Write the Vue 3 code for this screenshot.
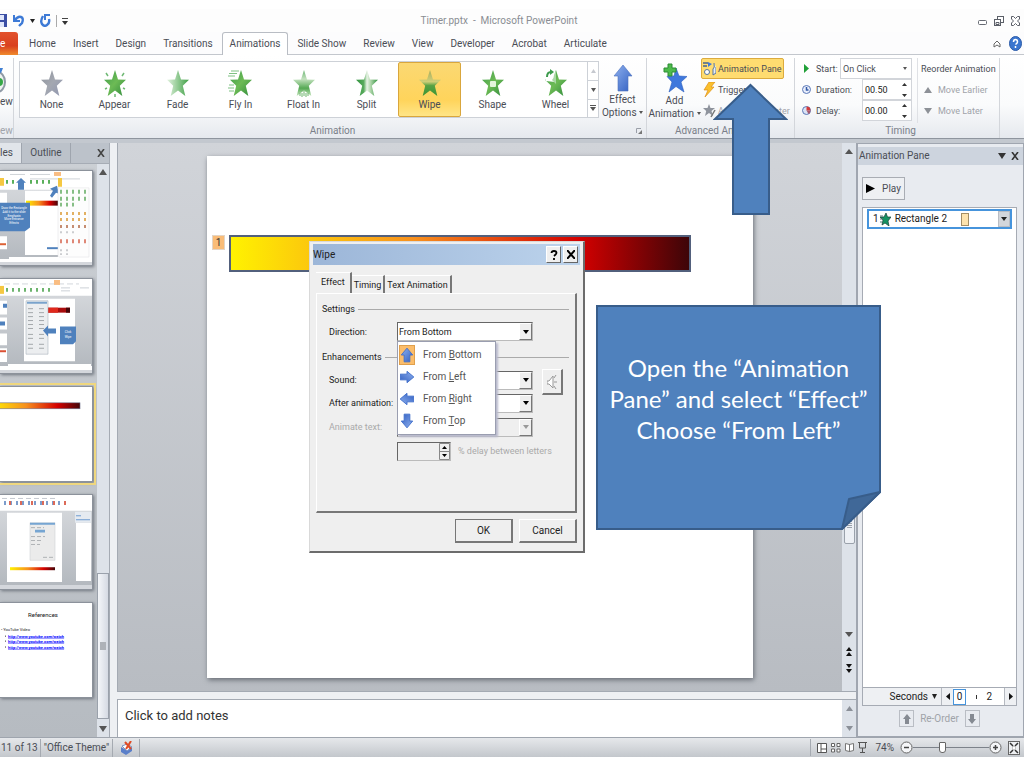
<script setup>
import { ref } from 'vue'

const tabs = ['Home', 'Insert', 'Design', 'Transitions', 'Animations', 'Slide Show', 'Review', 'View', 'Developer', 'Acrobat', 'Articulate']
const effects = [
  { name: 'None', fill: 'url(#g-none)' },
  { name: 'Appear', fill: 'url(#g-green)' },
  { name: 'Fade', fill: 'url(#g-fade)' },
  { name: 'Fly In', fill: 'url(#g-green)' },
  { name: 'Float In', fill: 'url(#g-float)' },
  { name: 'Split', fill: 'url(#g-split)' },
  { name: 'Wipe', fill: 'url(#g-wipe)' },
  { name: 'Shape', fill: 'url(#g-green)' },
  { name: 'Wheel', fill: 'url(#g-green)' },
]
const directions = [
  { key: 'B', rest: 'ottom', turn: 'up' },
  { key: 'L', rest: 'eft', turn: 'right' },
  { key: 'R', rest: 'ight', turn: 'left' },
  { key: 'T', rest: 'op', turn: 'down' },
]
const duration = ref('00.50')
const delay = ref('00.00')
const zoom = ref(37)
</script>

<template>
  <div class="window">
    <svg class="defs" width="0" height="0" aria-hidden="true">
      <defs>
        <linearGradient id="g-none" x1="0" y1="0" x2="1" y2="1"><stop offset="0" stop-color="#8d929b" /><stop offset=".5" stop-color="#a4a8b1" /><stop offset="1" stop-color="#8f95b0" /></linearGradient>
        <linearGradient id="g-green" x1="0" y1="0" x2="1" y2="1"><stop offset="0" stop-color="#3d9b4d" /><stop offset=".5" stop-color="#6dbb55" /><stop offset="1" stop-color="#2f8a3c" /></linearGradient>
        <linearGradient id="g-fade"><stop offset="0" stop-color="#e3f3e0" /><stop offset="1" stop-color="#3fa045" /></linearGradient>
        <linearGradient id="g-float" x1="0" y1="0" x2="0" y2="1"><stop offset="0" stop-color="#6ab573" /><stop offset=".35" stop-color="#c5e2c0" /><stop offset=".7" stop-color="#55a954" /><stop offset="1" stop-color="#c5e6bd" /></linearGradient>
        <linearGradient id="g-split"><stop offset="0" stop-color="#2f923e" /><stop offset=".35" stop-color="#58ab5c" /><stop offset=".5" stop-color="#e8f3e6" /><stop offset=".68" stop-color="#a9d3a5" /><stop offset="1" stop-color="#2f923e" /></linearGradient>
        <linearGradient id="g-wipe" x1="0" y1="0" x2="0" y2="1"><stop offset="0" stop-color="#a8ad5c" /><stop offset=".45" stop-color="#d0cf78" /><stop offset=".6" stop-color="#58a243" /><stop offset="1" stop-color="#3c9433" /></linearGradient>
        <linearGradient id="g-blue" x1="0" y1="0" x2="1" y2="1"><stop offset="0" stop-color="#8fb1ee" /><stop offset="1" stop-color="#3260c2" /></linearGradient>
        <linearGradient id="g-heat"><stop offset="0" stop-color="#fff200" /><stop offset=".4" stop-color="#f7901e" /><stop offset=".75" stop-color="#d40000" /><stop offset="1" stop-color="#450508" /></linearGradient>
        <linearGradient id="g-stage" x1="0" y1="0" x2="0" y2="1"><stop offset="0" stop-color="#d3d6da" /><stop offset="1" stop-color="#b4b9bf" /></linearGradient>
      </defs>
    </svg>

    <header class="titlebar">
      <div class="quick">
        <button aria-label="Save"><svg width="8" height="14"><path d="M0 0h7v13H0z" fill="#3b4fa5" /><path d="M0 1h4v5H0zM0 8h4v5H0z" fill="#dfe6fa" /></svg></button>
        <button aria-label="Undo"><svg width="12" height="13"><path d="M1 1v6h6" fill="none" stroke="#3d7ad6" stroke-width="2" /><path d="M2 6q3-4 6-3t1 6l-3 3" fill="none" stroke="#3d7ad6" stroke-width="2.4" /></svg></button>
        <svg width="5" height="4"><path d="M0 0h5L2.500 4z" fill="#222" /></svg>
        <button aria-label="Redo"><svg width="11" height="13"><path d="M3 2Q0 7 2 10t5 1q3-2 2-6" fill="none" stroke="#3d7ad6" stroke-width="2.400" /><path d="M5 6V1h5" fill="none" stroke="#3d7ad6" stroke-width="2" /></svg></button>
        <span class="bar"></span>
        <svg width="6" height="8"><path d="M0 1.500h6" stroke="#444" /><path d="M0 4h6L3 8z" fill="#333" /></svg>
      </div>
      <h1>Timer.pptx&nbsp; -&nbsp; Microsoft PowerPoint</h1>
      <div class="wincontrols">
        <button aria-label="Minimize"><svg width="9" height="12"><rect x=".5" y="5.500" width="8" height="4" rx="1" fill="#fff" stroke="#666a73" /></svg></button>
        <button aria-label="Restore"><svg width="10" height="12"><rect x="3.500" y="1.500" width="6" height="6" fill="#fff" stroke="#5b5f68" /><rect x=".5" y="4.500" width="6" height="6" fill="#fff" stroke="#5b5f68" /><path d="M2 7.500h3v2H2z" stroke="#5b5f68" fill="none" /></svg></button>
        <button aria-label="Close"><svg width="9" height="12"><path d="M.5 1.500h2l2 2 2-2h2v2.500l-2 2 2 2v2.500h-2l-2-2-2 2h-2V8l2-2-2-2z" fill="#fff" stroke="#5b5f68" /></svg></button>
      </div>
    </header>

    <nav class="tabs">
      <button class="file" aria-label="File">e</button>
      <button v-for="t in tabs" :key="t" class="tab" :class="{ on: t === 'Animations' }">{{ t }}</button>
      <div class="helpers">
        <button aria-label="Collapse ribbon"><svg width="8" height="8"><path d="M1 4l3-3 3 3v3L4 5 1 7z" fill="#fff" stroke="#666" /></svg></button>
        <button aria-label="Help"><svg width="13" height="15"><ellipse cx="6.500" cy="7.500" rx="6" ry="7" fill="#3b76cf" stroke="#2b5ba8" /><path d="M4.500 6q0-2.500 2-2.500T8.500 6q0 1-2 2.500M6.500 10v2" fill="none" stroke="#fff" stroke-width="1.500" /></svg></button>
      </div>
    </nav>

    <section class="ribbon">
      <div class="group preview">
        <div class="content"><button class="big" aria-label="Preview"><svg width="8" height="27"><ellipse cx="-3" cy="15" rx="8" ry="10" fill="#eef3f1" stroke="#8f9aa6" stroke-width="2" /><circle cx="-1" cy="15" r="4" fill="#37a848" /><path d="M-8 1H3l-2 5z" fill="#3f7fd3" /></svg><span>ew</span></button></div>
        <div class="caption">ew</div>
      </div>

      <div class="group animation">
        <div class="content">
          <div class="gallery">
            <button v-for="e in effects" :key="e.name" class="effect" :class="{ on: e.name === 'Wipe' }">
              <svg width="30" height="30" viewBox="0 0 30 30">
                <path d="M15 2l3 9.500 8 .3-6.200 6L22.300 28 15 22.500 7.700 28l2.500-10.200L4 11.800l8-.3z" :fill="e.fill" />
                <path v-if="e.name === 'Appear'" d="M8 8L6 5M22 8l2-3M7 20l-2 1M23 20l2 1M15 26v3" stroke="#6fb974" stroke-width="1.500" fill="none" />
                <path v-if="e.name === 'Fly In'" d="M5 3h8M3 5.500h8M2 8h7M3 17h5M2 20h6M3 23h5" stroke="#7fc183" fill="none" />
                <path v-if="e.name === 'Float In'" d="M11 28v-3M13 29v-4M15 28v-5M17 29v-4M19 28v-3" stroke="#6db56c" fill="none" />
                <rect v-if="e.name === 'Shape'" x="12" y="13" width="6" height="6" rx="1" fill="#e4f5dc" />
                <g v-if="e.name === 'Wheel'"><path d="M14 1v13L5 13V1z" fill="#fff" /><path d="M15 2v14l-4-4q2-2 2-5z" fill="#a9d8a5" /><path d="M6 9q0-5 4-5" fill="none" stroke="#3d9b4d" stroke-width="2" /><path d="M9 1l4 3-4 3z" fill="#3d9b4d" /></g>
              </svg>
              <span>{{ e.name }}</span>
            </button>
            <div class="scroller">
              <button aria-label="Row up"><svg width="5" height="4"><path d="M0 4h5L2.500 0z" fill="#c6c9cf" /></svg></button>
              <button aria-label="Row down"><svg width="5" height="4"><path d="M0 0h5L2.500 4z" fill="#555" /></svg></button>
              <button aria-label="More effects"><svg width="6" height="6"><path d="M0 .5h6" stroke="#555" /><path d="M0 2h6L3 6z" fill="#555" /></svg></button>
            </div>
          </div>
          <button class="big options">
            <svg width="22" height="28"><path d="M11 1l9 11h-4v15H6V12H2z" fill="url(#g-blue)" stroke="#4a70bd" stroke-width=".6" /></svg>
            <span>Effect<br />Options <i class="caret"></i></span>
          </button>
        </div>
        <div class="caption">Animation</div>
        <svg class="launcher" width="6" height="6"><path d="M.5 5V.5H5" fill="none" stroke="#9a9fa8" /><path d="M6 2v4H2z" fill="#777" /></svg>
      </div>

      <div class="group advanced">
        <div class="content">
          <button class="big add">
            <svg width="24" height="30"><path d="M13 5l3 8 8 .5-6 5.500 3 10-8-5.500L6 29l3-10-5-5.500 7-.5z" fill="#3f78dc" stroke="#2a5dbd" stroke-width=".6" /><path d="M5 1h4v4h4v4H9v4H5V9H1V5h4z" fill="#4dbb4b" stroke="#2c8c34" /></svg>
            <span>Add<br />Animation <i class="caret"></i></span>
          </button>
          <div class="stack">
            <button class="tool on"><svg width="13" height="15"><path d="M0 2h5M0 5h4" stroke="#46638f" stroke-width="1.500" /><path d="M5 1l4 2-4 3z" fill="#3f78dc" /><circle cx="4" cy="11" r="2.500" fill="#fff" stroke="#56749f" /><path d="M11 2q1 5-1 6v6l3-2V6" fill="#e8eef6" stroke="#56749f" /></svg>Animation Pane</button>
            <button class="tool"><svg width="13" height="15"><path d="M6 0h6L8 5h3L2 15l3-7H1z" fill="#fbc02d" stroke="#de8f18" stroke-width=".7" /></svg>Trigger <i class="caret"></i></button>
            <button class="tool off"><svg width="13" height="15"><path d="M6 1l1.500 4H12L8.500 8l1.500 5-4-3-4 3 1.200-5L0 5h4.500z" fill="#8f949d" /><path d="M12 7l-4 7" stroke="#777" stroke-width="1.500" /></svg>Animation Painter</button>
          </div>
        </div>
        <div class="caption">Advanced Animation</div>
      </div>

      <div class="group timing">
        <div class="content">
          <div class="fields">
            <label for="start"><svg width="9" height="11"><path d="M2 1l5 4.500-5 4.500z" fill="#21a038" /></svg>Start:</label>
            <div class="pick wide"><select id="start"><option>On Click</option></select><i class="caret"></i></div>
            <label for="duration"><svg width="9" height="11"><circle cx="4.500" cy="5.500" r="4" fill="#e9eefb" stroke="#5b79b8" /><path d="M4.500 3v3h2" fill="none" stroke="#345ba8" stroke-width="1.500" /></svg>Duration:</label>
            <div class="pick"><input id="duration" v-model="duration" /><svg width="5" height="14"><path d="M0 3h5L2.500 0zM0 11h5l-2.500 3z" fill="#333" /></svg></div>
            <label for="delay"><svg width="9" height="11"><circle cx="4.500" cy="5.500" r="4" fill="#d9e2f5" stroke="#5b79b8" /><path d="M4.500 1.500v4h4q0-4-4-4z" fill="#d23a3a" /><path d="M4.500 5.500h4q0 3-2 3.500z" fill="#a55a70" /></svg>Delay:</label>
            <div class="pick"><input id="delay" v-model="delay" /><svg width="5" height="14"><path d="M0 3h5L2.500 0zM0 11h5l-2.500 3z" fill="#333" /></svg></div>
          </div>
          <div class="reorder">
            <strong>Reorder Animation</strong>
            <button disabled><svg width="8" height="6"><path d="M0 6h8L4 0z" fill="#8d9197" /></svg>Move Earlier</button>
            <button disabled><svg width="8" height="6"><path d="M0 0h8L4 6z" fill="#8d9197" /></svg>Move Later</button>
          </div>
        </div>
        <div class="caption">Timing</div>
      </div>
    </section>

    <main class="work">
      <aside class="slides">
        <div class="sidetabs">
          <button class="on" aria-label="Slides">les</button>
          <button>Outline</button>
          <button class="close" aria-label="Close panel"><svg width="8" height="8"><path d="M1 0l6 8M7 0L1 8" stroke="#444" stroke-width="1.600" /></svg></button>
        </div>
        <div class="thumbs">
          <div class="list">
            <svg class="thumb" viewBox="0 0 92 95" preserveAspectRatio="none">
              <rect width="92" height="95" fill="#fff" />
              <path d="M0 19h58v70H0z" fill="url(#g-stage)" /><path d="M10 3.500h15M30 3.500h20M0 8h3M30 8h50" stroke="#cfd3d8" />
              <path d="M54 1h7v4h-7z" fill="#f9bd83" /><path d="M0 7h4v8H0zM58 7h4v9h-4z" fill="#f5c842" />
              <path d="M6 11h2M12 11h2M30 11h2M36 11h2M42 11h2M48 11h2" stroke="#5ab05b" stroke-width="4" />
              <path d="M25 20h33v65H25z" fill="#fff" /><path d="M26 30h32v5H26z" fill="url(#g-heat)" />
              <path d="M21 7l5 5h-2v7h-6v-7h-2zM57 15l2 8-3-1-4 5-2-2 3-5-3-2z" fill="#4f81bd" />
              <path d="M47 77h12v2H47z" fill="#4f81bd" />
              <path d="M58 17h31v70H58z" fill="#fdfdfd" stroke="#e0e0e4" stroke-width=".5" />
              <path d="M60 21h27M60 28h27M60 34h14" stroke="#86be85" stroke-width="4" stroke-dasharray="2 4" />
              <path d="M60 43h27M60 49h27" stroke="#e2b062" stroke-width="3" stroke-dasharray="2 4" />
              <path d="M60 56h27" stroke="#c58d72" stroke-width="3" stroke-dasharray="2 4" /><path d="M60 62h14M60 80h9M60 84h8" stroke="#cccdd0" stroke-width="2" stroke-dasharray="2 4" />
              <path d="M60 71h27" stroke="#df8877" stroke-width="4" stroke-dasharray="2 4" />
              <path d="M0 22h7v12H0zM0 38h7v8H0zM0 66h7v13H0z" fill="#fff" /><path d="M0 73h6v2H0z" fill="#dc6135" />
              <path d="M0 32h30v25l-5 4H0z" fill="#4f81bd" />
              <text x="14" y="38" class="mini">Draw the Rectangle</text><text x="14" y="42" class="mini">Add it to the slide</text><text x="14" y="46" class="mini">Emphasis</text><text x="14" y="50" class="mini">More Entrance</text><text x="14" y="54" class="mini">Effects</text>
              <path d="M9 87h50v5H9z" fill="#fff" /><path d="M0 92h92v3H0z" fill="#d4d7dc" />
            </svg>
            <svg class="thumb" viewBox="0 0 92 95" preserveAspectRatio="none">
              <rect width="92" height="95" fill="#fff" /><path d="M0 17h92v71H0z" fill="url(#g-stage)" />
              <path d="M4 5h75" stroke="#d3d7dc" stroke-width="1" stroke-dasharray="6 3" /><path d="M54 1h6v5h-6z" fill="#f9bd83" /><path d="M0 7h4v8H0z" fill="#f5c842" />
              <path d="M6 11h45" stroke="#6db46e" stroke-width="4" stroke-dasharray="2 4" /><path d="M61 9h9M61 12h9M80 9h9" stroke="#ccd1d7" />
              <path d="M24 20h51v63H24z" fill="#fff" /><path d="M46 29h24v5H46z" fill="#a80c0c" /><path d="M46 29h12v5H46z" fill="#e0281c" /><path d="M66 29h4v5h-4z" fill="#450508" />
              <path d="M26 22h22v54H26z" fill="#eceef0" stroke="#9ba7b4" stroke-width=".5" /><path d="M27 23h20v2H27z" fill="#7aa3cc" />
              <path d="M28 30h17M28 34h17M28 38h17M28 42h17M28 46h17M28 50h17M28 56h17M28 60h17M28 66h17M28 70h17" stroke="#a3a7aa" stroke-dasharray="5 6" />
              <path d="M43 52l5-5v3h8v5h-8v3zM60 48h16v15l-3 3H60z" fill="#4f81bd" /><text x="68" y="55" class="mini">Click</text><text x="68" y="60" class="mini">Wipe</text>
              <path d="M0 22h7v14H0zM0 39h7v12H0zM0 55h7v12H0zM0 70h7v14H0z" fill="#fff" /><path d="M3 25h4v4H3zM0 43h5v4H0z" fill="#4f81bd" /><path d="M0 72h6v2H0z" fill="#db5033" />
              <path d="M8 86h83v5H8z" fill="#fff" /><path d="M0 92h92v3H0z" fill="#d4d7dc" />
            </svg>
            <svg class="thumb current" viewBox="0 0 92 95" preserveAspectRatio="none">
              <rect width="92" height="95" fill="#fff" /><rect x="-10" y="16" width="90" height="6" fill="url(#g-heat)" stroke="#6d6f8a" stroke-width=".6" />
            </svg>
            <svg class="thumb" viewBox="0 0 92 95" preserveAspectRatio="none">
              <rect width="92" height="95" fill="#fff" /><path d="M0 16h92v75H0z" fill="url(#g-stage)" />
              <path d="M2 3.500h53" stroke="#c5c9d0" stroke-dasharray="5 3" /><path d="M4 8h62" stroke="#7b9ccb" stroke-width="4" stroke-dasharray="2 4" /><path d="M9 8h57" stroke="#dc6a58" stroke-width="4" stroke-dasharray="2 9" />
              <path d="M7 18h55v70H7zM76 28h15v59H76z" fill="#fff" /><path d="M75 17h16v11H75z" fill="#e5eaf0" /><path d="M76 21h5M76 25h14" stroke="#6d9bd0" />
              <path d="M30 28h25v38H30z" fill="#ebebeb" stroke="#c8ccd0" stroke-width=".5" /><path d="M30 28h25v2H30zM35 35h10v3H35z" fill="#76a5d2" />
              <path d="M31 33h13M31 42h14M31 46h12M31 50h9M43 63h10" stroke="#aeb1b4" stroke-dasharray="4 2" />
              <rect x="10" y="73" width="45" height="3" fill="url(#g-heat)" /><path d="M0 91h92v4H0z" fill="#d4d7dc" />
            </svg>
            <svg class="thumb" viewBox="0 0 92 95" preserveAspectRatio="none">
              <rect width="92" height="95" fill="#fff" />
              <text x="43" y="14" class="reftitle">References</text><text x="1" y="28" class="refline">• YouTube Video</text>
              <text x="8" y="35" class="reflink">http://www.youtube.com/watch</text><text x="8" y="40" class="reflink">http://www.youtube.com/watch</text><text x="8" y="46" class="reflink">http://www.youtube.com/watch</text>
              <path d="M5 33.500h1M5 38.500h1M5 44.500h1" stroke="#333" />
            </svg>
          </div>
          <div class="scrollbar side">
            <svg width="8" height="6"><path d="M0 6h8L4 0z" fill="#555" /></svg>
            <span class="grip"></span>
            <svg width="8" height="6"><path d="M0 0h8L4 6z" fill="#555" /></svg>
          </div>
        </div>
      </aside>

      <section class="editor">
        <div class="stage">
          <div class="canvas"><div class="slide"><span class="badge">1</span><div class="heat"></div></div></div>
          <div class="scrollbar main">
            <svg width="8" height="5"><path d="M0 5h8L4 0z" fill="#555" /></svg>
            <span class="grip"></span>
            <div class="pager">
              <svg width="8" height="5"><path d="M0 0h8L4 5z" fill="#555" /></svg>
              <svg width="6" height="9"><path d="M0 4h6L3 0zM0 9h6L3 5z" fill="#111" /></svg>
              <svg width="6" height="9"><path d="M0 0h6L3 4zM0 5h6L3 9z" fill="#111" /></svg>
            </div>
          </div>
        </div>
        <div class="notes">
          <div class="notetext">Click to add notes</div>
          <div class="scrollbar"><svg width="7" height="5"><path d="M0 5h7L3.500 0z" fill="#8b9098" /></svg><svg width="7" height="5"><path d="M0 0h7L3.500 5z" fill="#8b9098" /></svg></div>
        </div>
      </section>

      <aside class="pane">
        <header><h2>Animation Pane</h2><svg width="8" height="6"><path d="M0 0h8L4 6z" fill="#333" /></svg><button aria-label="Close pane"><svg width="8" height="8"><path d="M1 0l6 8M7 0L1 8" stroke="#333" stroke-width="1.600" /></svg></button></header>
        <button class="play"><svg width="9" height="9"><path d="M0 0l9 4.500L0 9z" fill="#000" /></svg>Play</button>
        <div class="timeline">
          <div class="item"><span>1</span><svg width="12" height="13"><path d="M7 0l1.500 4H12L9 8l1 5-4-3-3 2 1-5L1 4h4z" fill="#159263" stroke="#163f37" stroke-width=".7" /><path d="M1 3h3M1 6h3M1 9h2" stroke="#577" /></svg><span class="name">Rectangle 2</span><i class="block"></i><button aria-label="Effect menu"><svg width="6" height="4"><path d="M0 0h6L3 4z" fill="#222" /></svg></button></div>
          <div class="ruler">
            <button class="unit">Seconds <svg width="5" height="5"><path d="M0 0h5L2.500 5z" fill="#222" /></svg></button>
            <button class="step" aria-label="Scroll left"><svg width="4" height="7"><path d="M4 0v7L0 3.500z" fill="#111" /></svg></button>
            <div class="marks"><span class="zero">0</span><span class="tick"></span><span>2</span></div>
            <button class="step" aria-label="Scroll right"><svg width="4" height="7"><path d="M0 0v7l4-3.500z" fill="#111" /></svg></button>
          </div>
        </div>
        <div class="moves">
          <button disabled aria-label="Move up"><svg width="8" height="10"><path d="M4 0l4 5H6v5H2V5H0z" fill="#858a92" /></svg></button>
          <span>Re-Order</span>
          <button disabled aria-label="Move down"><svg width="8" height="10"><path d="M4 10l4-5H6V0H2v5H0z" fill="#858a92" /></svg></button>
        </div>
      </aside>
    </main>

    <footer class="status">
      <span class="count">11 of 13</span><span class="theme">"Office Theme"</span>
      <span class="spell"><svg width="13" height="14"><path d="M1 6l5 3 6-3v4l-6 4-5-3z" fill="#5a7fc9" /><path d="M2 5l5-2 5 3-5 4z" fill="#fff" stroke="#7a93c4" /><path d="M5 1l6 7M11 0L6 8" stroke="#e04b25" stroke-width="2" /></svg></span>
      <div class="views">
        <button aria-label="Normal"><svg width="10" height="10"><path d="M.5.5h9v9h-9zM4 .5v9M4 6h6" fill="#fff" stroke="#555" /></svg></button>
        <button aria-label="Sorter"><svg width="10" height="10"><path d="M.5.500h3v3h-3zM6 .500h3v3H6zM.5 6h3v3h-3zM6 6h3v3H6z" fill="#fff" stroke="#666" /></svg></button>
        <button aria-label="Reading"><svg width="9" height="11"><path d="M.5 1.500l4 1 4-1v7l-4 1-4-1zM4.500 2v8" fill="#fff" stroke="#777" /></svg></button>
        <button aria-label="Show"><svg width="9" height="11"><path d="M0 .5h9M1.500 1v5h6V1M4.500 6v4M2 10.500h5" fill="none" stroke="#555" /></svg></button>
      </div>
      <span class="pct">74%</span>
      <button aria-label="Zoom out"><svg width="13" height="13"><circle cx="6.500" cy="6.500" r="5.500" fill="#f5f6f8" stroke="#666" /><path d="M4 6.500h5" stroke="#444" stroke-width="1.500" /></svg></button>
      <input v-model="zoom" class="zoom" type="range" aria-label="Zoom" />
      <button aria-label="Zoom in"><svg width="13" height="13"><circle cx="6.500" cy="6.500" r="5.500" fill="#f5f6f8" stroke="#666" /><path d="M4 6.500h5M6.500 4v5" stroke="#444" stroke-width="1.500" /></svg></button>
      <button aria-label="Fit"><svg width="12" height="14"><rect x=".5" y=".5" width="11" height="13" fill="#eef0f2" stroke="#666" /><path d="M2 2l3 3M10 2L7 5M2 12l3-3M10 12L7 9" stroke="#333" stroke-width="1.500" /><rect x="4.500" y="5.500" width="3" height="3" fill="#fff" stroke="#999" stroke-width=".5" /></svg></button>
    </footer>

    <section class="dialog" role="dialog" aria-label="Wipe">
      <header><h2>Wipe</h2>
        <button aria-label="What's this"><svg width="8" height="10"><path d="M1.500 3q0-2 2.500-2t2.500 2q0 1-2.500 3M4 8v2" fill="none" stroke="#000" stroke-width="1.800" /></svg></button>
        <button aria-label="Close"><svg width="8" height="9"><path d="M0 0l8 9M8 0L0 9" stroke="#000" stroke-width="2" /></svg></button>
      </header>
      <div class="dtabs"><button class="on">Effect</button><button>Timing</button><button>Text Animation</button></div>
      <div class="page">
        <div class="legend">Settings<i></i></div>
        <div class="row first"><label for="dir">Direction:</label>
          <div class="combo"><select id="dir"><option>From Bottom</option></select><b></b>
            <ul class="menu">
              <li v-for="(d, i) in directions" :key="d.key"><span class="ico" :class="{ on: i === 0 }"><svg width="14" height="16" viewBox="0 0 12 14"><path :class="d.turn" d="M6 1l5 6H8.500v6h-5V7H1z" fill="url(#g-blue)" stroke="#3f6fca" stroke-width=".8" /></svg></span><span>From <u>{{ d.key }}</u>{{ d.rest }}</span></li>
            </ul>
          </div>
        </div>
        <div class="legend">Enhancements<i></i></div>
        <div class="row sound"><label for="sound">Sound:</label><div class="combo"><select id="sound"><option></option></select><b></b></div>
          <button class="speaker" aria-label="Volume"><svg width="10" height="16"><path d="M0 7v3h2l4 4V2L2 7z" fill="#fff" stroke="#999" /><path d="M7 4l2-3M7 8h3M7 12l2 3" stroke="#999" /></svg></button></div>
        <div class="row"><label for="after">After animation:</label><div class="combo"><select id="after"><option></option></select><b></b></div></div>
        <div class="row dim"><label for="animtext">Animate text:</label><div class="combo"><select id="animtext" disabled><option></option></select><b></b></div></div>
        <div class="row dim"><span></span><div class="spin"><input id="pct" disabled /><span><svg width="11" height="17"><path d="M.5.500h10v16H.5zM0 8.500h11" fill="none" stroke="#888" /><path d="M3 6h5L5.500 3zM3 11h5l-2.500 3z" fill="#000" /></svg></span></div><label for="pct">% delay between letters</label></div>
      </div>
      <div class="actions"><button class="default">OK</button><button>Cancel</button></div>
    </section>

    <svg class="pointer" width="75" height="134"><path d="M37.500 3L73 37H56v95H20V37H2z" fill="#4f81bd" stroke="#385d8a" stroke-width="2" /></svg>
    <div class="callout">
      <svg viewBox="0 0 285 225" preserveAspectRatio="none"><path d="M1 1h283v186l-38 37H1z" fill="#4f81bd" stroke="#385d8a" stroke-width="2" /><path d="M246 224l7-30 31-7z" fill="#406898" stroke="#385d8a" stroke-width="2" stroke-linejoin="round" /></svg>
      <p>Open the “Animation<br />Pane” and select “Effect”<br />Choose “From Left”</p>
    </div>
  </div>
</template>

<style>
body { margin: 0; background: #fff; }
</style>

<style scoped>
.window { position: relative; display: flex; flex-direction: column; box-sizing: border-box; min-height: 100vh; padding: 9px 0 11px; overflow: hidden; background: #fff; color: #4a4d55; font: 10px/14px Roboto, sans-serif; }
.window * { box-sizing: border-box; }
.defs { position: absolute; }
button, input, select { margin: 0; padding: 0; border: 0; background: none; font: inherit; color: inherit; border-radius: 0; outline: 0; }
button { display: flex; align-items: center; justify-content: center; white-space: nowrap; }
select, .zoom { appearance: none; }
h1, h2, p, ul { margin: 0; padding: 0; font-weight: normal; font-size: inherit; }
svg { flex: none; display: block; }
.caret { display: inline-block; border: 2px solid transparent; border-top: 3px solid #555; border-bottom: 0; vertical-align: middle; }

.titlebar { display: grid; grid-template-columns: 1fr auto 1fr; align-items: center; height: 23px; background: #fdfdfd; }
.titlebar h1 { margin-right: 26px; color: #8a8d93; }
.quick { display: flex; align-items: center; gap: 5px; }
.bar { width: 1px; height: 12px; background: #aaa; }
.wincontrols { display: flex; justify-content: flex-end; gap: 7px; padding-right: 4px; }

.tabs { display: flex; gap: 1px; height: 23px; background: #fcfcfd; box-shadow: inset 0 -1px #c3c7cd; }
.file { width: 18px; margin-right: 2px; justify-content: flex-start; background: linear-gradient(#e2522d, #d9401f 60%, #f08a2c); color: #fff; border-radius: 0 3px 0 0; }
.tab { padding: 0 7px; border: 1px solid transparent; border-bottom: 0; }
.tab.on { border-color: #b9bdc4; border-radius: 3px 3px 0 0; background: #fff; }
.helpers { display: flex; gap: 8px; align-items: center; margin-left: auto; padding-right: 2px; }

.ribbon { display: flex; height: 84px; padding-top: 3px; background: linear-gradient(#fff, #fafbfc 60%, #e6e9ee); border-bottom: 1px solid #8f959e; }
.group { position: relative; display: flex; flex-direction: column; border-right: 1px solid #d3d6db; }
.group .content { display: flex; height: 65px; }
.caption { height: 15px; text-align: center; color: #7a7f89; white-space: nowrap; line-height: 15px; }
.preview { width: 14px; align-items: flex-start; }
.preview .caption { color: #a0a4ab; }
.big { flex-direction: column; gap: 1px; line-height: 13px; padding-top: 1px; }
.preview .big { justify-content: flex-start; align-items: flex-start; gap: 1px; padding-top: 9px; }
.animation { width: 633px; padding-left: 5px; }
.gallery { display: flex; margin-top: 3px; height: 57px; border: 1px solid #cdd1d7; background: #fff; }
.effect { width: 63px; flex-direction: column; border: 1px solid transparent; border-radius: 2px; }
.effect.on { border-color: #d9a63c; background: linear-gradient(#fbd873, #ffd45b 70%, #ffe587); }
.scroller { display: grid; grid-template-rows: repeat(3, 1fr); width: 11px; border-left: 1px solid #cdd1d7; }
.scroller button + button { border-top: 1px solid #cdd1d7; }
.options { width: 47px; }
.launcher { position: absolute; right: 4px; bottom: 4px; }
.advanced { width: 148px; padding-left: 1px; }
.add { width: 53px; }
.stack { display: grid; grid-template-rows: repeat(3, 21px); justify-items: start; font-size: 9px; }
.tool { gap: 2px; padding: 0 1px; border: 1px solid transparent; }
.tool.on { border-color: #dcab3e; border-radius: 2px; background: #ffdc70; }
.off, .reorder button { color: #a0a3a9; }
.timing { width: 205px; padding-left: 7px; }
.timing .content { font-size: 9px; }
.fields { display: grid; grid-template-columns: 60px 50px; grid-template-rows: repeat(3, 21px); }
.fields label { display: flex; align-items: center; gap: 5px; white-space: nowrap; }
.pick { display: flex; align-items: center; justify-content: space-between; height: 21px; padding: 0 4px 0 2px; border: 1px solid #d2d5da; background: #fff; }
.pick.wide { width: 72px; margin-left: -22px; }
.pick input { width: 30px; color: #222; }
.pick.wide select { flex: 1; }
.reorder { display: grid; grid-template-rows: repeat(3, 21px); align-items: center; justify-items: start; margin-left: 5px; padding-left: 3px; border-left: 1px solid #dfe1e5; white-space: nowrap; }
.reorder strong { font-weight: normal; }
.reorder button { gap: 6px; padding-left: 3px; }

.work { flex: 1; display: grid; grid-template-columns: 110px minmax(0, 1fr) 168px; column-gap: 0; padding-top: 4px; background: #c3c8cf; }
.slides { display: flex; flex-direction: column; background: linear-gradient(#ccd0d5, #b6bbc1); border-right: 1px solid #a5abb4; }
.sidetabs { display: flex; height: 21px; background: #bcc2ca; border-bottom: 1px solid #a6acb5; }
.sidetabs button { width: 49px; border-right: 1px solid #9fa5ae; }
.sidetabs .on { width: 22px; justify-content: flex-start; background: #e1e5ea; }
.sidetabs .close { width: 16px; margin-left: auto; border: 0; }
.thumbs { flex: 1; display: flex; justify-content: space-between; }
.list { display: flex; flex-direction: column; gap: 12px; padding-top: 6px; }
.thumb { width: 93px; height: 96px; border: 1px solid #8c929b; border-left: 0; box-shadow: 1px 1px 3px #6f757e; }
.thumb.current { outline: 2px solid #efd77e; outline-offset: 1px; }
.mini { font-size: 3px; fill: #fff; text-anchor: middle; }
.reftitle { font-size: 6px; fill: #111; text-anchor: middle; }
.refline { font-size: 4px; fill: #222; }
.reflink { font-size: 4px; font-weight: bold; fill: #00f; text-decoration: underline; }
.scrollbar { display: flex; flex-direction: column; align-items: center; justify-content: space-between; width: 14px; padding: 6px 0; background: #dde2e9; }
.scrollbar.side { width: 12px; padding: 5px 0; }
.side .grip { width: 12px; height: 146px; margin-top: auto; margin-bottom: 7px; border: 1px solid #9aa1ab; background: linear-gradient(#aeb2b8, #aeb2b8) center / 6px 8px no-repeat, linear-gradient(90deg, #f4f6f9, #d5dae3); }

.editor { display: flex; flex-direction: column; min-width: 0; padding-left: 7px; background: #eef0f3; }
.stage { flex: 1; display: flex; border: 1px solid #a4aab3; border-width: 0 0 1px 1px; }
.canvas { flex: 1; display: flex; padding: 13px 89px; background: linear-gradient(#d1d4d9, #b8bcc2); }
.slide { flex: 1; display: flex; align-items: flex-start; gap: 4px; padding: 79px 62px 0 5px; background: #fff; box-shadow: 1px 2px 5px #676c74; }
.badge { flex: none; width: 13px; height: 15px; border: 1px solid #e3d5c6; background: #f9bc77; color: #333; text-align: center; line-height: 13px; }
.heat { flex: 1; height: 37px; border: 2px solid #52607c; background: linear-gradient(90deg, #fff200, #f7901e 40%, #d40000 76%, #3d0508); }
.main .grip { width: 11px; height: 40px; margin-top: 262px; border: 1px solid #9aa1ab; border-radius: 2px; background: repeating-linear-gradient(#9aa1ab 0 1px, #edf0f5 1px 2px) center / 5px 7px no-repeat, #edf0f5; }
.pager { display: flex; flex-direction: column; align-items: center; gap: 8px; margin-bottom: 12px; }
.pager svg:nth-child(2) { margin-top: 2px; }
.notes { display: flex; height: 38px; margin-top: 7px; border: 1px solid #a4aab3; border-width: 1px 0 0 1px; background: #fff; }
.notetext { flex: 1; padding: 7px 7px; color: #333; font-size: 13px; line-height: 18px; }

.pane { display: flex; flex-direction: column; padding: 3px 6px 8px 4px; border: 1px solid #a0a6b0; border-width: 1px 1px 1px 2px; background: #e8ebf0; }
.pane header { display: flex; align-items: center; gap: 5px; height: 18px; margin: 0 -6px 12px -4px; padding: 0 4px 0 1px; background: #cdd4de; }
.pane h2 { flex: 1; }
.play { width: 43px; height: 23px; gap: 7px; border: 1px solid #a9adb4; background: #eef0f3; }
.timeline { flex: 1; display: flex; flex-direction: column; justify-content: space-between; margin-top: 7px; border: 1px solid #a6abb4; background: #fff; }
.item { display: flex; align-items: center; height: 20px; margin: 1px 4px; padding-left: 4px; border: 2px solid #4694dc; color: #222; }
.item .name { flex: 1; padding-left: 4px; white-space: nowrap; }
.block { width: 8px; height: 13px; margin-right: 29px; border: 1px solid #a28d66; background: #fde3ae; }
.item button { width: 12px; height: 16px; background: #d3d6db; border: 1px solid #b9bdc4; }
.ruler { display: flex; height: 18px; border-top: 1px solid #a6abb4; background: #eef0f3; color: #222; }
.unit { flex: 1; justify-content: flex-end; gap: 4px; padding-right: 4px; }
.step { width: 12px; border-left: 1px solid #b5b9c0; }
.marks { display: flex; align-items: center; justify-content: space-between; width: 51px; padding-right: 12px; background: #fff; }
.zero { width: 13px; height: 16px; border: 1px solid #4694dc; text-align: center; }
.tick { width: 1px; height: 4px; background: #333; }
.moves { display: flex; align-items: center; justify-content: center; gap: 6px; height: 19px; margin-top: 3px; color: #a0a3a9; }
.moves button { width: 15px; height: 17px; border: 1px solid #b9bdc4; }

.status { display: flex; align-items: center; height: 20px; padding-right: 4px; background: linear-gradient(#e6e8eb, #c3c7cc); border-top: 1px solid #9fa5ae; }
.status > span { line-height: 18px; white-space: nowrap; }
.count { width: 41px; padding-left: 1px; border-right: 1px solid #a5aab1; }
.theme { width: 72px; text-align: center; border-right: 1px solid #a5aab1; }
.spell { width: 27px; padding: 2px 7px; border-right: 1px solid #a5aab1; }
.views { display: flex; align-items: center; gap: 4px; margin-left: auto; padding-left: 6px; height: 17px; border-left: 1px solid #a5aab1; }
.pct { padding: 0 6px 0 8px; }
.zoom { width: 76px; height: 13px; background: linear-gradient(#7d828a, #7d828a) center / 100% 1px no-repeat; }
.zoom::-webkit-slider-thumb { appearance: none; width: 7px; height: 11px; border: 1px solid #666; border-radius: 1px 1px 3px 3px; background: #fff; }
.status > button:last-child { margin-left: 6px; }

.dialog { position: absolute; left: 309px; top: 241px; width: 276px; padding: 2px 3px 8px; border: 1px solid; border-color: #d9d9d9 #6c6c6c #6c6c6c #d9d9d9; border-width: 1px 2px 2px 1px; background: #efefef; color: #222; font-size: 9px; }
.dialog header { display: flex; align-items: center; gap: 2px; height: 21px; padding: 0 2px 0 0; background: linear-gradient(90deg, #9cb6d8, #bcd3ec); font-size: 10px; }
.dialog h2 { flex: 1; }
.dialog header button { width: 15px; height: 17px; background: #efefef; border: 1px solid; border-color: #fff #666 #666 #fff; }
.dtabs { display: flex; align-items: flex-end; height: 28px; padding-left: 3px; }
.dtabs button { height: 18px; padding: 0 2px; border-top: 1px solid #fff; border-right: 2px solid #777; }
.dtabs .on { height: 21px; padding: 0 5px 2px; }
.page { height: 220px; margin: 0 3px; padding: 7px 6px 0 5px; border: 1px solid; border-color: #fff #777 #777 #fff; border-width: 1px 2px 2px 1px; }
.legend { display: flex; align-items: center; gap: 3px; height: 16px; }
.legend i { flex: 1; height: 1px; background: #aaa; }
.row { display: flex; align-items: center; height: 24px; padding-left: 7px; }
.row.first { height: 32px; padding-bottom: 3px; }
.row.sound { height: 26px; padding-top: 4px; }
.row > label, .row > span { white-space: nowrap; }
.row > label:first-child, .row > span:first-child { flex: 0 0 68px; min-width: 0; }
.combo, .spin { position: relative; display: flex; flex: none; width: 136px; height: 19px; border: 1px solid; border-color: #666 #bbb #bbb #666; background: #fff; }
.combo select { flex: 1; padding-left: 1px; opacity: 1; color: #222; }
.combo b { width: 13px; background: #efefef; border: 1px solid; border-color: #fff #777 #777 #fff; display: grid; place-items: center; }
.combo b::after { content: ""; border: 3px solid transparent; border-top: 4px solid #000; border-bottom: 0; }
.dim { color: #aaa; }
.dim .combo, .dim .spin { background: #efefef; }
.dim b::after { border-top-color: #999; }
.spin { width: 54px; margin-right: 7px; }
.spin input { width: 41px; }
.speaker { flex: none; width: 21px; height: 26px; margin: 4px 0 0 9px; border: 1px solid; border-color: #fff #777 #777 #fff; border-width: 1px 2px 2px 1px; }
.menu { position: absolute; z-index: 2; left: -1px; top: 18px; width: 99px; padding: 2px 1px; border: 1px solid #9a9eb0; background: #fff; box-shadow: 2px 2px 2px #b8b9cc; list-style: none; color: #555; font-size: 10px; }
.menu li { display: flex; align-items: center; height: 22px; gap: 8px; }
.ico { display: grid; place-items: center; width: 16px; height: 20px; }
.ico.on { background: #fbbd6b; box-shadow: inset 0 0 0 1px #e0a04c; }
.menu path { transform-origin: 6px 7px; }
.right { transform: rotate(90deg); }
.left { transform: rotate(-90deg); }
.down { transform: rotate(180deg); }
.actions { display: flex; justify-content: flex-end; gap: 6px; padding: 6px 3px 0; font-size: 10px; }
.actions button { width: 58px; height: 24px; border: 1px solid; border-color: #fff #777 #777 #fff; border-width: 1px 2px 2px 1px; }
.actions .default { border-color: #777; }

.pointer { position: absolute; left: 713px; top: 82px; }
.callout { position: absolute; left: 596px; top: 305px; width: 285px; height: 225px; }
.callout svg { width: 100%; height: 100%; }
.callout p { position: absolute; inset: 47px 0 auto; text-align: center; color: #fff; font: 24px/31px Lato, sans-serif; white-space: nowrap; }
</style>
